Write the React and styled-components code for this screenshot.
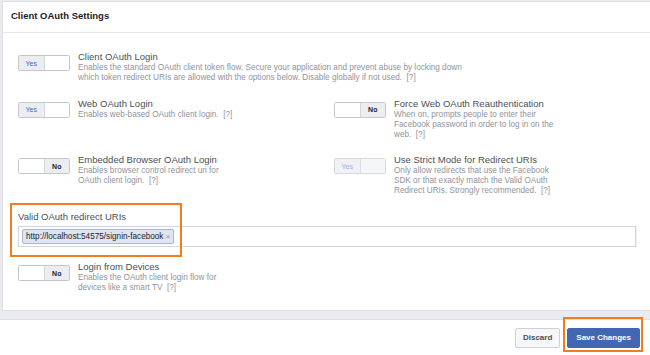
import React from 'react';
import styled, { createGlobalStyle } from 'styled-components';

const GlobalStyle = createGlobalStyle`
  html, body {
    margin: 0;
    padding: 0;
    background: #e9ebee;
    font-family: "Liberation Sans", Arial, Helvetica, sans-serif;
  }
`;

const settings = [
  {
    title: 'Client OAuth Login',
    text: 'Enables the standard OAuth client token flow. Secure your application and prevent abuse by locking down which token redirect URIs are allowed with the options below. Disable globally if not used.',
    on: true,
    wide: true,
  },
  { title: 'Web OAuth Login', text: 'Enables web-based OAuth client login.', on: true },
  {
    title: 'Force Web OAuth Reauthentication',
    text: 'When on, prompts people to enter their Facebook password in order to log in on the web.',
    on: false,
  },
  {
    title: 'Embedded Browser OAuth Login',
    text: 'Enables browser control redirect uri for OAuth client login.',
    on: false,
  },
  {
    title: 'Use Strict Mode for Redirect URIs',
    text: 'Only allow redirects that use the Facebook SDK or that exactly match the Valid OAuth Redirect URIs. Strongly recommended.',
    on: true,
    disabled: true,
  },
];

const Toggle = ({ on, disabled }) => (
  <Switch $disabled={disabled}>
    <Half $active={on} $disabled={disabled} $yes>{on ? 'Yes' : ''}</Half>
    <Half $active={!on} $disabled={disabled}>{on ? '' : 'No'}</Half>
  </Switch>
);

// the help marker stays in the same text run, two spaces after the sentence
const Setting = ({ title, text, on, disabled, wide }) => (
  <Row $wide={wide}>
    <Toggle on={on} disabled={disabled} />
    <Info>
      <Title>{title}</Title>
      <Desc $wide={wide}>{`${text}\u00a0 [?]`}</Desc>
    </Info>
  </Row>
);

export default function App() {
  return (
    <Page>
      <GlobalStyle />
      <Card>
        <Header>Client OAuth Settings</Header>
        <Body>
          {settings.map((s) => (
            <Setting key={s.title} {...s} />
          ))}
          <Field>
            <FieldLabel>Valid OAuth redirect URIs</FieldLabel>
            <TokenInput>
              <Tag>
                http://localhost:54575/signin-facebook
                <TagClose>×</TagClose>
              </Tag>
            </TokenInput>
            <Highlight $top={-8} $left={-8} $width={172} $height={54} />
          </Field>
          <Setting
            title="Login from Devices"
            text="Enables the OAuth client login flow for devices like a smart TV"
            on={false}
          />
        </Body>
      </Card>
      <Footer>
        <Button>Discard</Button>
        <ButtonWrap>
          <Button $primary>Save Changes</Button>
          <Highlight $top={-11} $left={-4} $width={80} $height={35} />
        </ButtonWrap>
      </Footer>
    </Page>
  );
}

const Page = styled.div`
  min-height: 355px;
  padding-top: 1px;
  box-sizing: border-box;
  display: flex;
  flex-direction: column;
  overflow: hidden;
`;

const Card = styled.div`
  margin-left: 2px;
  background: #fff;
  border: 1px solid #dddfe2;
  border-right: none;
`;

const Header = styled.div`
  height: 31px;
  box-sizing: border-box;
  padding: 8px 0 0 8px;
  border-bottom: 1px solid #e5e5e5;
  font-size: 9.5px;
  line-height: 12px;
  font-weight: bold;
  color: #1d2129;
`;

const Body = styled.div`
  display: grid;
  grid-template-columns: 316px 1fr;
  row-gap: 14.5px;
  padding: 18px 0 16.5px 15px;
`;

const Row = styled.div`
  display: flex;
  align-items: flex-start;
  gap: 8px;
  grid-column: ${(p) => (p.$wide ? '1 / -1' : 'auto')};
`;

const Switch = styled.div`
  flex: none;
  display: flex;
  width: 52px;
  height: 16px;
  margin-top: 4px;
  box-sizing: border-box;
  border: 1px solid ${(p) => (p.$disabled ? '#d6d9dd' : '#c4c8ce')};
  border-radius: 2px;
  overflow: hidden;
  background: #fff;
`;

const Half = styled.div`
  flex: 1;
  display: flex;
  align-items: center;
  justify-content: center;
  font-size: 7px;
  font-weight: ${(p) => (p.$yes ? 'normal' : 'bold')};
  color: ${(p) => (p.$yes ? (p.$disabled ? '#9cb0d6' : '#4267b2') : '#1d2129')};
  background: ${(p) =>
    p.$active ? (p.$disabled ? '#f0f1f4' : '#ebedf0') : p.$disabled ? '#f5f6f7' : '#fff'};
  border-right: ${(p) => (p.$yes ? `1px solid ${p.$disabled ? '#dddfe2' : '#d3d6db'}` : 'none')};
`;

const Info = styled.div`
  display: flex;
  flex-direction: column;
`;

const Title = styled.div`
  font-size: 9.5px;
  line-height: 12px;
  color: #4b4f56;
`;

const Desc = styled.div`
  max-width: ${(p) => (p.$wide ? '392px' : '162px')};
  font-size: 8.2px;
  line-height: 10px;
  color: #90949c;
`;

const Field = styled.div`
  position: relative;
  grid-column: 1 / -1;
  display: flex;
  flex-direction: column;
  gap: 3px;
  padding-right: 14px;
`;

const FieldLabel = styled.div`
  font-size: 9.5px;
  line-height: 12px;
  color: #4b4f56;
`;

const TokenInput = styled.div`
  height: 21px;
  box-sizing: border-box;
  padding: 2px 3px;
  border: 1px solid #d3d6db;
  box-shadow: 1px 0 0 #eceef1;
  display: flex;
  align-items: center;
  background: #fff;
`;

const Tag = styled.span`
  display: inline-flex;
  align-items: center;
  height: 15px;
  box-sizing: border-box;
  padding: 0 3px;
  background: #dfe5f0;
  border: 1px solid #a7b7d6;
  border-radius: 2px;
  font-size: 8.2px;
  color: #1d2129;
`;

const TagClose = styled.span`
  margin-left: 2px;
  font-size: 8px;
  color: #8d949e;
`;

const Highlight = styled.div`
  position: absolute;
  top: ${(p) => p.$top}px;
  left: ${(p) => p.$left}px;
  width: ${(p) => p.$width}px;
  height: ${(p) => p.$height}px;
  box-sizing: border-box;
  border: 2px solid #f47c20;
  pointer-events: none;
`;

const Footer = styled.div`
  flex: 1;
  margin-top: 8px;
  background: #fff;
  border-top: 1px solid #dddfe2;
  display: flex;
  justify-content: flex-end;
  align-items: flex-start;
  gap: 7px;
  padding: 8px 10px 0 0;
`;

const ButtonWrap = styled.div`
  position: relative;
  display: flex;
`;

const Button = styled.button`
  height: 20px;
  padding: 0 ${(p) => (p.$primary ? '8px' : '7px')};
  border: 1px solid ${(p) => (p.$primary ? '#4267b2' : '#ced0d4')};
  border-radius: 2px;
  background: ${(p) => (p.$primary ? '#4267b2' : '#f6f7f9')};
  color: ${(p) => (p.$primary ? '#fff' : '#4b4f56')};
  font-family: "Liberation Sans", Arial, sans-serif;
  font-size: 8px;
  font-weight: bold;
  cursor: pointer;
`;
